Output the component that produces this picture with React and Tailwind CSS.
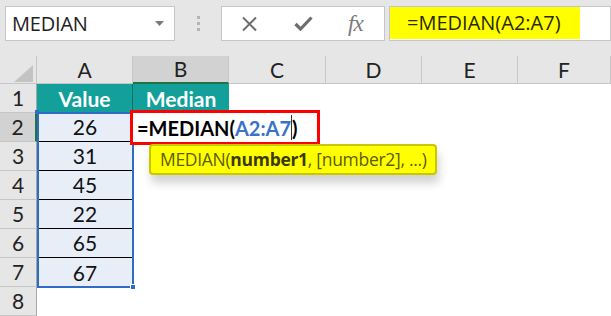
import React from "react";

const cols = ["A", "B", "C", "D", "E", "F"];
const values = [26, 31, 45, 22, 65, 67];

const Corner = () => (
  <div className="relative bg-[#e6e6e6] border-r border-b border-[#c6c6c6]">
    <svg className="absolute left-0 top-0" width="37" height="28" viewBox="0 0 37 28">
      <polygon points="33,9 33,26 14,26" fill="#c3c3c3" />
    </svg>
  </div>
);

const ColHeader = ({ label }) => {
  const selected = label === "B";
  return (
    <div
      className={
        selected
          ? "flex items-center justify-center bg-[#d2d2d2] border-r border-[#c6c6c6] border-b-2 border-b-[#217346] text-[21px] text-[#222]"
          : "flex items-center justify-center bg-[#e6e6e6] border-r border-[#c6c6c6] border-b border-b-[#c6c6c6] text-[21px] text-[#222]"
      }
    >
      {label}
    </div>
  );
};

const RowHeader = ({ n }) => {
  const selected = n === 2;
  return (
    <div
      className={
        selected
          ? "flex items-center justify-center bg-[#d2d2d2] border-b border-[#c6c6c6] border-r-2 border-r-[#217346] text-[21px] text-[#222]"
          : "flex items-center justify-center bg-[#e6e6e6] border-b border-[#c6c6c6] border-r border-r-[#a6a6a6] text-[21px] text-[#222]"
      }
    >
      {n}
    </div>
  );
};

export default function App() {
  return (
    <div className="relative w-[611px] h-[316px] overflow-hidden bg-white font-['Lato','Liberation_Sans',sans-serif]">
      {/* formula bar */}
      <div className="h-[56px] bg-[#e6e6e6] flex items-start pt-[6px] pl-[5px] font-['Open_Sans','Liberation_Sans',sans-serif]">
        <div className="w-[170px] h-[35px] bg-white border border-[#c6c6c6] flex items-center justify-between pl-[6px] pr-[10px]">
          <span className="text-[20px] text-[#222] tracking-[-0.2px]">MEDIAN</span>
          <svg width="9" height="5" viewBox="0 0 9 5">
            <polygon points="0,0 9,0 4.5,5" fill="#7a7a7a" />
          </svg>
        </div>
        <div className="w-[46px] h-[35px] flex flex-col items-center justify-center gap-[3px]">
          <span className="w-[3px] h-[3px] bg-[#b4b4b4]" />
          <span className="w-[3px] h-[3px] bg-[#b4b4b4]" />
          <span className="w-[3px] h-[3px] bg-[#b4b4b4]" />
        </div>
        <div className="w-[164px] h-[35px] bg-white border border-[#c6c6c6] flex items-center pl-[19px]">
          <svg width="17" height="16" viewBox="0 0 17 16">
            <path d="M2 1.5 L15 14.5 M15 1.5 L2 14.5" stroke="#6e6e6e" strokeWidth="2" />
          </svg>
          <svg className="ml-[36px]" width="19" height="15" viewBox="0 0 19 15">
            <path d="M1.5 8 L6.5 13 L17.5 1.5" stroke="#6e6e6e" strokeWidth="3.2" fill="none" />
          </svg>
          <span className="ml-[35px] text-[23px] leading-none italic text-[#7a7a7a] font-['Liberation_Serif',serif] tracking-[-1px]">
            fx
          </span>
        </div>
        <div className="ml-[4px] flex-1 h-[35px] bg-white border border-[#c6c6c6] flex">
          <div className="w-[190px] h-[32px] bg-[#ffff00] flex items-center pl-[17px] text-[20px] text-[#2a2a00]">
            =MEDIAN(A2:A7)
          </div>
        </div>
      </div>

      {/* sheet grid */}
      <div className="grid grid-cols-[37px_96px_96px_97px_96px_96px_93px] grid-rows-[28px_29px_29px_29px_29px_29px_29px_29px_29px]">
        <Corner />
        {cols.map((c) => (
          <ColHeader key={c} label={c} />
        ))}

        <RowHeader n={1} />
        <div className="flex items-center justify-center bg-[#139f9a] text-white font-bold text-[21px] border-r border-[#0b6e6a]">
          Value
        </div>
        <div className="flex items-center justify-center bg-[#139f9a] text-white font-bold text-[21px]">
          Median
        </div>
        <div />
        <div />
        <div />
        <div />

        {values.map((v, i) => (
          <React.Fragment key={v}>
            <RowHeader n={i + 2} />
            <div
              className={
                i < 5
                  ? "flex items-center justify-center bg-[#e8eef8] border-b border-black text-[21px] text-[#111]"
                  : "flex items-center justify-center bg-[#e8eef8] text-[21px] text-[#111]"
              }
            >
              {v}
            </div>
            <div />
            <div />
            <div />
            <div />
            <div />
          </React.Fragment>
        ))}

        <RowHeader n={8} />
        <div />
        <div />
        <div />
        <div />
        <div />
        <div />
      </div>

      {/* selection A2:A7 */}
      <div className="absolute left-[37px] top-[112px] w-[97px] h-[176px] border-2 border-[#2f6cc6]" />
      <div className="absolute left-[35px] top-[110px] w-[4px] h-[4px] bg-[#2f6cc6]" />
      <div className="absolute left-[130px] top-[284px] w-[6px] h-[6px] bg-[#2f6cc6] border border-white" />

      {/* editing cell */}
      <div className="absolute left-[130px] top-[110px] w-[190px] h-[35px] border-[3px] border-[#ff0000] bg-white flex items-center pl-[4px] text-[20px] font-bold text-black">
        <span>=MEDIAN(</span>
        <span className="text-[#3a72c9]">A2:A7</span>
        <span className="w-px h-[25px] bg-[#333]" />
        <span>)</span>
      </div>

      {/* function tooltip */}
      <div className="absolute left-[149px] top-[144px] w-[288px] h-[31px] rounded-[4px] border-2 border-[#c8c800] bg-[#ffff00] shadow-[2px_8px_10px_rgba(0,0,0,0.18)] flex items-center pl-[9px] text-[17.5px] text-[#5c5c00] font-['Open_Sans','Liberation_Sans',sans-serif] tracking-[-0.3px]">
        <span>MEDIAN(</span>
        <span className="font-bold text-[#3a3a00]">number1</span>
        <span>, [number2], ...)</span>
      </div>
    </div>
  );
}
